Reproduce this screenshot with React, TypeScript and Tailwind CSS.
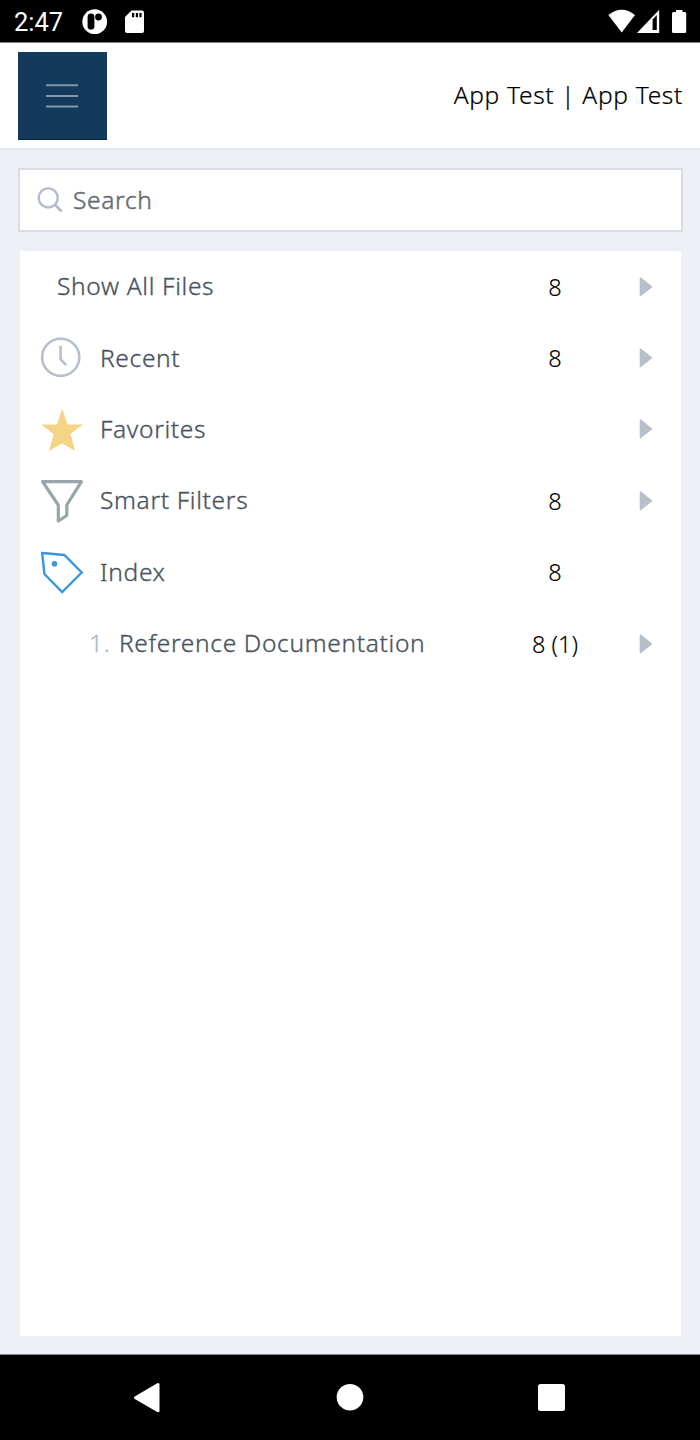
import React from "react";

function StatusBar() {
  return (
    <header className="flex h-[43px] shrink-0 items-start border-b border-[#808080] bg-black pl-[14px] pr-[13px] text-white">
      <span className="mt-px w-[50px] whitespace-nowrap font-[Roboto] text-[25.500px] font-normal leading-[43px]">2:47</span>
      <svg className="ml-[18px] mt-[9px]" width="26" height="26" viewBox="0 0 26 26">
        <circle cx="12.700" cy="12.700" r="12.4" fill="white" />
        <rect x="5.6" y="4.6" width="6.8" height="16" rx="3.4" fill="black" />
        <circle cx="16.500" cy="8" r="3.4" fill="black" />
      </svg>
      <svg className="ml-[17px] mt-[10px]" width="20" height="24" viewBox="0 0 20 24">
        <path d="M6.5 .5H17Q19 .5 19 2.5V21Q19 23 17 23H2Q0 23 0 21V7Z" fill="white" />
        <path d="M8.1 3V7.2M11.9 3V7.2M15.5 3V7.2" stroke="black" strokeWidth="2.2" />
      </svg>
      <svg className="ml-auto mt-[9px]" width="28" height="25" viewBox="0 0 28 25">
        <path d="M.4 6Q13.700-4.500 27 6L13.700 23.500Z" fill="white" />
      </svg>
      <svg className="ml-px mt-[9px]" width="23" height="25" viewBox="0 0 23 25">
        <path d="M22.200 .8V24H0Z" fill="white" />
        <path d="M15.600 10.500L19.800 6V21H15.600Z" fill="black" />
      </svg>
      <svg className="ml-[12px] mt-[9px]" width="15" height="25" viewBox="0 0 15 25">
        <path d="M4 1H10.500V3H13Q14.200 3 14.200 4.500V22.500Q14.200 24 12.700 24H1.500Q0 24 0 22.500V4.500Q0 3 1.500 3H4Z" fill="white" />
      </svg>
    </header>
  );
}

const icons: Record<string, React.ReactNode> = {
  recent: (
    <g fill="none" stroke="#b6bfca" strokeWidth="2.6">
      <circle cx="20.700" cy="21.300" r="18.600" />
      <path d="M20.600 9.800V23.300L26.200 29.100" />
    </g>
  ),
  star: <path d="M22.200 1.600L27.500 17.500H43.200L30.500 27L35.100 43.700L22.200 36.500L9 43.700L13.700 27L1 17.500H17Z" fill="#f5d387" />,
  filter: (
    <path d="M2.600 2.700H41.400L26.800 26V36.500L18.300 42V26Z" fill="none" stroke="#98a5a9" strokeWidth="3.200" strokeLinejoin="round" />
  ),
  tag: (
    <g>
      <path d="M2.200 3L24.300 5L41.700 22.500L22.200 42L4.400 24Z" fill="none" stroke="#3b97dc" strokeWidth="2.400" />
      <circle cx="14.500" cy="13.700" r="2.800" fill="#3b97dc" />
    </g>
  ),
};

type Item = { label: string; icon?: string; number?: string; count?: string; arrow: boolean };

const items: Item[] = [
  { label: "Show All Files", count: "8", arrow: true },
  { label: "Recent", icon: "recent", count: "8", arrow: true },
  { label: "Favorites", icon: "star", arrow: true },
  { label: "Smart Filters", icon: "filter", count: "8", arrow: true },
  { label: "Index", icon: "tag", count: "8", arrow: false },
  { label: "Reference Documentation", number: "1.", count: "8 (1)", arrow: true },
];

function Row({ item }: { item: Item }) {
  return (
    <li className="flex h-[71.400px] items-center whitespace-nowrap">
      {item.icon ? (
        <svg className="ml-[20px] mr-[16px] shrink-0" width="44" height="44" viewBox="0 0 44 44">
          {icons[item.icon]}
        </svg>
      ) : item.number ? (
        <span className="ml-[69px] w-[30px] shrink-0 tracking-[0.650px] text-[#a9bdc9] [-webkit-text-stroke:0.35px_#a9bdc9]">{item.number}</span>
      ) : (
        <span className="w-[37px] shrink-0" />
      )}
      <span className="flex-1 tracking-[0.670px] [-webkit-text-stroke:0.35px_#4a535e]">{item.label}</span>
      <span className="w-[100px] pt-px text-center text-[23.500px] text-black [-webkit-text-stroke:0.15px_black]">{item.count}</span>
      <span className="flex w-[76px] shrink-0 justify-end pr-[28px]">
        {item.arrow && (
          <svg width="14" height="20" viewBox="0 0 14 20">
            <path d="M1.500 1.200L12.300 9.800L1.500 18.500Z" fill="#b6bfca" stroke="#b6bfca" strokeWidth="1.600" strokeLinejoin="round" />
          </svg>
        )}
      </span>
    </li>
  );
}

export default function App() {
  return (
    <div className="flex h-[1440px] w-[700px] flex-col overflow-hidden bg-[#edf1f6] font-['Noto_Sans','Open_Sans',sans-serif] text-[24.500px] font-light text-[#4a535e]">
      <StatusBar />
      <div className="flex h-[107px] shrink-0 items-start justify-between border-b-2 border-[#e6eaee] bg-white pl-[18px] pr-[17px] pt-[9px]">
        <button aria-label="Menu" className="flex h-[88px] w-[89px] items-center justify-center border-b border-[#082449] bg-[#133a5a] pr-px">
          <svg width="32" height="26" viewBox="0 0 32 26">
            <path d="M0 2.200H32M0 12.900H32M0 23.600H32" stroke="#8097ad" strokeWidth="2" />
          </svg>
        </button>
        <h1 className="whitespace-nowrap font-light leading-[86px] tracking-[0.670px] text-black [-webkit-text-stroke:0.2px_black]">App Test | App Test</h1>
      </div>
      <main className="flex flex-1 flex-col">
        <label className="ml-[18px] mt-[18px] flex h-[64px] w-[665px] items-center border-2 border-[#dadde3] bg-white pl-[17px]">
          <svg width="26" height="26" viewBox="0 0 26 26" fill="none" stroke="#b4bdc9">
            <circle cx="11.200" cy="10.900" r="9.500" strokeWidth="2.400" />
            <path d="M18 17.700L24.700 24.400" strokeWidth="2.800" />
          </svg>
          <span className="ml-[10px] tracking-[0.670px] text-[#666c74] [-webkit-text-stroke:0.5px_#666c74]">Search</span>
        </label>
        <ul className="ml-[20px] mt-[19px] h-[1085px] w-[661px] bg-white">
          {items.map((item) => (
            <Row key={item.label} item={item} />
          ))}
        </ul>
      </main>
      <nav className="flex h-[86px] shrink-0 items-start border-t border-[#85888b] bg-black pl-[133px] pt-[28px]">
        <svg width="28" height="30" viewBox="0 0 28 30">
          <path d="M2.500 14.700L25 1.600V27.800Z" fill="white" stroke="white" strokeWidth="3" strokeLinejoin="round" />
        </svg>
        <svg className="ml-[175px]" width="28" height="28" viewBox="0 0 28 28">
          <circle cx="14" cy="14.200" r="13.300" fill="white" />
        </svg>
        <span className="ml-[174px] mt-px h-[27px] w-[27px] rounded-[2.500px] bg-white" />
      </nav>
    </div>
  );
}
